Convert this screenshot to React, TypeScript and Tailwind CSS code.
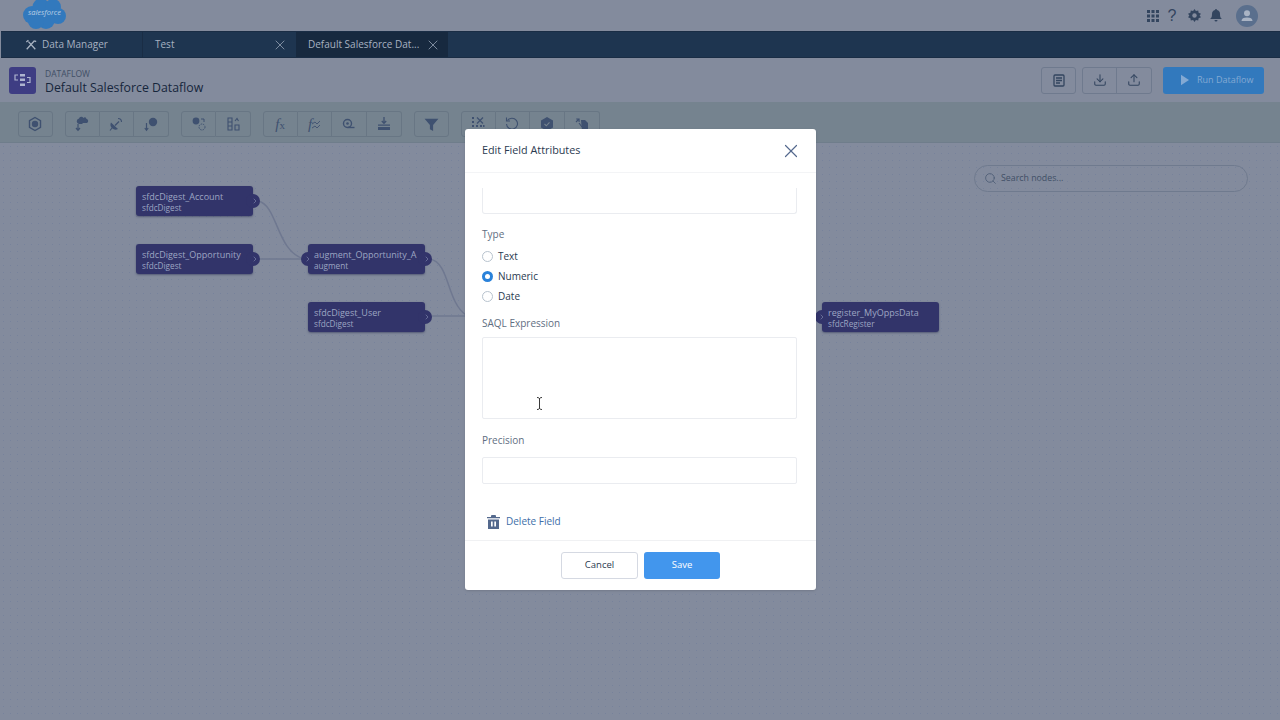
import { ChevronRight, Download, Search, Upload, X } from 'lucide-react'
import type { ReactNode } from 'react'

// small stroke wrapper so toolbar glyphs share one look
function Glyph({ children, size = 16 }: { children: ReactNode; size?: number }) {
  return (
    <svg width={size} height={size} viewBox="0 0 16 16" fill="#3f5170" stroke="none">
      {children}
    </svg>
  )
}

const icons: Record<string, ReactNode> = {
  hex: (
    <Glyph>
      <path d="M8 1.500l5.500 3.200v6.600L8 14.500l-5.500-3.200V4.700z" fill="none" stroke="#3f5170" strokeWidth="1.400" />
      <circle cx="8" cy="8" r="3.200" />
    </Glyph>
  ),
  cloudDown: (
    <Glyph>
      <path d="M5 2.500a2.500 2.500 0 0 1 4.400-.6 2 2 0 0 1 3 .9 2.200 2.200 0 0 1 .4 4.200H9L8 8H5a2.800 2.800 0 0 1 0-5.500z" />
      <path d="M4 8v6M2 12l2 2.400L6 12" fill="none" stroke="#3f5170" strokeWidth="1.200" />
    </Glyph>
  ),
  dish: (
    <Glyph>
      <path d="M3 6.500l7 6.500a5 5 0 0 1-7-6.500z" />
      <path d="M7 9.500l4-4" stroke="#3f5170" strokeWidth="1.300" />
      <path d="M10 2.500a3.500 3.500 0 0 1 3.500 3.500M4 12l-2 2.500" fill="none" stroke="#3f5170" strokeWidth="1.100" />
    </Glyph>
  ),
  blobDown: (
    <Glyph>
      <circle cx="10" cy="6" r="4.200" />
      <path d="M3.500 7v7M1.800 12l1.700 2.300L5.200 12" fill="none" stroke="#3f5170" strokeWidth="1.200" />
    </Glyph>
  ),
  dotRing: (
    <Glyph>
      <circle cx="5" cy="5" r="3.400" />
      <circle cx="11" cy="11" r="3" fill="none" stroke="#3f5170" strokeWidth="1" strokeDasharray="1.500 1" />
      <path d="M10 3h3v3" fill="none" stroke="#3f5170" strokeWidth="1" />
    </Glyph>
  ),
  blocks: (
    <Glyph>
      <path d="M3 2h4v12H3zM10 9h4v5h-4z" fill="none" stroke="#3f5170" strokeWidth="1.100" />
      <path d="M3 6h4M3 10h4M10 5l2-2.500L13.500 5" fill="none" stroke="#3f5170" strokeWidth="1.100" />
    </Glyph>
  ),
  fx: (
    <span className="font-['Liberation_Serif',serif] text-[15px] italic leading-none text-[#3f5170]">
      f<span className="text-[11px] not-italic">x</span>
    </span>
  ),
  fxWave: (
    <span className="flex items-center font-['Liberation_Serif',serif] text-[15px] italic leading-none text-[#3f5170]">
      f
      <svg width="9" height="9" viewBox="0 0 9 9" fill="none" stroke="#3f5170" strokeWidth="0.900">
        <path d="M0 4l3-2 2 2 3-3M0 8l3-2 2 2 3-3" />
      </svg>
    </span>
  ),
  tape: (
    <Glyph>
      <circle cx="6.500" cy="7.500" r="4" fill="none" stroke="#3f5170" strokeWidth="1.400" />
      <circle cx="6.500" cy="7.500" r="1.300" />
      <path d="M7 11.500h6.500" stroke="#3f5170" strokeWidth="1.400" />
    </Glyph>
  ),
  loadBar: (
    <Glyph>
      <path d="M8 1v6M5.800 5L8 7.400 10.200 5" fill="none" stroke="#3f5170" strokeWidth="1.300" />
      <path d="M2 8.500h12v1.200H2zM2 11h12v3H2z" />
    </Glyph>
  ),
  filter: (
    <Glyph size={17}>
      <path d="M1.500 2.500h13L9.500 8.500V14l-3-1.500v-4z" />
    </Glyph>
  ),
  gridX: (
    <Glyph>
      <path d="M2 1h2v2H2zM2 5h2v2H2zM2 9h2v2H2zM2 13h2v2H2zM6 9h2v2H6zM6 13h2v2H6zM10 9h2v2h-2zM10 13h2v2h-2zM13 9h1.500v2H13zM13 13h1.500v2H13z" />
      <path d="M7 1.500l6 6M13 1.500l-6 6" stroke="#3f5170" strokeWidth="1.200" />
    </Glyph>
  ),
  undo: (
    <Glyph>
      <path d="M3.500 4.500A5.500 5.500 0 1 1 2.500 8" fill="none" stroke="#3f5170" strokeWidth="1.100" />
      <path d="M2.500 1.500v3.500h3.500" fill="none" stroke="#3f5170" strokeWidth="1.100" />
    </Glyph>
  ),
  shield: (
    <Glyph>
      <path d="M8 1l6 3.400v7.200L8 15l-6-3.400V4.400z" />
      <path d="M5.500 8l1.800 1.800 3.200-3.400" fill="none" stroke="#75838f" strokeWidth="1.100" />
    </Glyph>
  ),
  docUp: (
    <Glyph>
      <path d="M7 4h4l3 3v8H8z" />
      <path d="M2 6l3-3M2.200 3h2.900v2.900M5 7l3 4" fill="none" stroke="#3f5170" strokeWidth="1.100" />
    </Glyph>
  ),
}

const toolbarGroups = [
  ['hex'],
  ['cloudDown', 'dish', 'blobDown'],
  ['dotRing', 'blocks'],
  ['fx', 'fxWave', 'tape', 'loadBar'],
  ['filter'],
  ['gridX', 'undo', 'shield', 'docUp'],
]

const nodes = [
  { name: 'sfdcDigest_Account', type: 'sfdcDigest', left: 'left-[136px]', top: 'top-[43px]', inPort: false, outPort: true },
  { name: 'sfdcDigest_Opportunity', type: 'sfdcDigest', left: 'left-[136px]', top: 'top-[101px]', inPort: false, outPort: true },
  { name: 'augment_Opportunity_A', type: 'augment', left: 'left-[308px]', top: 'top-[101px]', inPort: true, outPort: true },
  { name: 'sfdcDigest_User', type: 'sfdcDigest', left: 'left-[308px]', top: 'top-[159px]', inPort: false, outPort: true },
  { name: 'register_MyOppsData', type: 'sfdcRegister', left: 'left-[822px]', top: 'top-[159px]', inPort: true, outPort: false },
]

function Port({ side }: { side: 'in' | 'out' }) {
  return (
    <div
      className={`absolute top-[8px] flex h-[14px] w-[14px] items-center justify-center rounded-full bg-[#32346a] ${
        side === 'in' ? 'left-[-7px]' : 'right-[-7px]'
      }`}
    >
      <ChevronRight size={8} strokeWidth={1.500} className={`text-[#9aa3c2] ${side === 'in' ? '' : 'ml-[3px]'}`} />
    </div>
  )
}

function Radio({ label, checked }: { label: string; checked?: boolean }) {
  return (
    <div className="flex h-[20px] items-center gap-[5px]">
      {checked ? (
        <span className="flex h-[11px] w-[11px] items-center justify-center rounded-full bg-[#2a82da]">
          <span className="h-[5px] w-[5px] rounded-full bg-white" />
        </span>
      ) : (
        <span className="h-[11px] w-[11px] rounded-full border border-[#b8c3ce] bg-white" />
      )}
      <span className="text-[10px] text-[#2b3a50]">{label}</span>
    </div>
  )
}

export default function App() {
  return (
    <div className="flex h-[720px] w-[1280px] flex-col overflow-hidden bg-[#838b9d] font-['Open_Sans',sans-serif]">
      {/* Global header */}
      <div className="flex h-[31px] shrink-0 items-center justify-between pl-[22px] pr-[22px]">
        <div className="relative h-[31px] w-[44px] overflow-hidden">
          <svg width="44" height="30" viewBox="0 0 44 30" fill="#3279bd">
            <circle cx="10" cy="15" r="9" />
            <circle cx="19" cy="7" r="8.500" />
            <circle cx="31" cy="7" r="8" />
            <circle cx="36" cy="16" r="8" />
            <circle cx="24" cy="20" r="9" />
            <circle cx="14" cy="21" r="8" />
          </svg>
          <span className="absolute left-[6px] top-[7px] text-[7.500px] italic text-[#b9cfe6]">salesforce</span>
        </div>
        <div className="flex items-center">
          <svg width="12" height="12" viewBox="0 0 12 12" fill="#33455f">
            <path d="M0 0h3v3H0zM4.500 0h3v3h-3zM9 0h3v3H9zM0 4.500h3v3H0zM4.500 4.500h3v3h-3zM9 4.500h3v3H9zM0 9h3v3H0zM4.500 9h3v3h-3zM9 9h3v3H9z" />
          </svg>
          <span className="ml-[8px] w-[10px] text-center font-['Liberation_Sans',sans-serif] text-[16px] leading-none text-[#33455f]">?</span>
          <svg className="ml-[11px]" width="13" height="13" viewBox="0 0 14 14" fill="#33455f">
            <path d="M7 0l1.500 2.200L11 1.500l.4 2.600L14 5 12.500 7 14 9l-2.600.9-.4 2.600-2.500-.7L7 14l-1.500-2.200-2.500.7-.4-2.600L0 9l1.500-2L0 5l2.600-.9.4-2.600 2.500.7z" />
            <circle cx="7" cy="7" r="2.400" fill="#838b9d" />
          </svg>
          <svg className="ml-[9px]" width="12" height="13" viewBox="0 0 12 13" fill="#33455f">
            <path d="M6 0a1 1 0 0 1 1 1c2 .5 3 2 3 4 0 3 .6 3.800 2 5H0c1.400-1.200 2-2 2-5 0-2 1-3.500 3-4a1 1 0 0 1 1-1zM4.500 11h3a1.500 1.500 0 0 1-3 0z" />
          </svg>
          <span className="ml-[14px] flex h-[22px] w-[22px] items-center justify-center rounded-full bg-[#5a6f8d]">
            <svg width="14" height="14" viewBox="0 0 14 14" fill="#aab4c4">
              <circle cx="7" cy="4.200" r="3" />
              <path d="M1.500 12c0-2.500 2-3.600 5.500-3.600s5.500 1.100 5.500 3.600z" />
            </svg>
          </span>
        </div>
      </div>

      {/* Tabs */}
      <div className="ml-[1px] flex h-[27px] shrink-0 border-y border-y-[#1a2d45] bg-[#1e3550] text-[10px] text-[#a7b2c1]">
        <div className="flex w-[142px] items-center gap-[5px] border-r border-[#1a2d45] pl-[24px]">
          <svg width="12" height="12" viewBox="0 0 14 14" fill="none" stroke="#a7b2c1" strokeWidth="1.500">
            <path d="M2 12L11 2M4 3l8 9M1.500 3.500L4 1.500M11 2l2 1" />
          </svg>
          Data Manager
        </div>
        <div className="flex w-[153px] items-center justify-between pl-[12px] pr-[8px]">
          Test
          <X size={16} strokeWidth={1.300} className="text-[#8c9aad]" />
        </div>
        <div className="flex w-[152px] items-center justify-between bg-[#17293f] pl-[12px] pr-[7px]">
          <span className="truncate">Default Salesforce Dat...</span>
          <X size={16} strokeWidth={1.300} className="shrink-0 text-[#8c9aad]" />
        </div>
      </div>

      {/* Dataflow title row */}
      <div className="flex h-[44px] shrink-0 items-center justify-between pl-[9px] pr-[16px]">
        <div className="flex items-center gap-[9px]">
          <div className="flex h-[27px] w-[27px] items-center justify-center rounded-[3px] bg-[#3e3d83]">
            <svg width="17" height="14" viewBox="0 0 17 14" fill="#aeb4cf">
              <path d="M6 1h5v2.500H6zM6 5.500h5V8H6zM6 10.500h5V13H6z" />
              <path d="M4 2H1v5h3M13 4.500h3v5h-3" fill="none" stroke="#aeb4cf" strokeWidth="1.200" />
            </svg>
          </div>
          <div className="flex flex-col pt-[3px]">
            <span className="text-[8.500px] leading-[11px] text-[#414f66]">DATAFLOW</span>
            <span className="text-[12.300px] leading-[17px] text-[#16263c]">Default Salesforce Dataflow</span>
          </div>
        </div>
        <div className="flex items-center">
          <button className="flex h-[27px] w-[35px] items-center justify-center rounded-[3px] border border-[#6f7a8e]">
            <svg width="12" height="13" viewBox="0 0 12 13" fill="none" stroke="#33455f" strokeWidth="1.300">
              <rect x="1" y="1" width="10" height="11" rx="1" />
              <path d="M3 4h6M3 6.500h6M3 9h4" />
            </svg>
          </button>
          <div className="ml-[6px] flex h-[27px] rounded-[3px] border border-[#6f7a8e]">
            <button className="flex w-[34px] items-center justify-center border-r border-[#6f7a8e] text-[#33455f]">
              <Download size={14} strokeWidth={1.800} />
            </button>
            <button className="flex w-[34px] items-center justify-center text-[#33455f]">
              <Upload size={14} strokeWidth={1.800} />
            </button>
          </div>
          <button className="ml-[11px] flex h-[27px] w-[101px] items-center gap-[8px] rounded-[3px] bg-[#3279bd] pl-[18px] text-[9px] text-[#83a9d3]">
            <svg width="8" height="12" viewBox="0 0 9 12" fill="#83a9d3">
              <path d="M0 0l9 6-9 6z" />
            </svg>
            Run Dataflow
          </button>
        </div>
      </div>

      {/* Node toolbar */}
      <div className="flex h-[41px] shrink-0 items-start gap-[12px] border-b border-[#6f7d8b] bg-[#75838f] pl-[18px] pt-[9px]">
        {toolbarGroups.map((group, i) => (
          <div key={i} className="flex h-[26px]">
            {group.map((name, j) => (
              <div
                key={name}
                className={`flex w-[34.800px] items-center justify-center border-y border-r border-[#687684] ${
                  j === 0 ? 'rounded-l-[3px] border-l' : ''
                } ${j === group.length - 1 ? 'rounded-r-[3px]' : ''}`}
              >
                {icons[name]}
              </div>
            ))}
          </div>
        ))}
      </div>

      {/* Canvas */}
      <div className="relative flex-1 bg-[radial-gradient(#77829b_0.6px,transparent_0.8px)] bg-[length:7px_7px]">
        <svg className="absolute left-0 top-0" width="480" height="200" fill="none" stroke="#6f7890" strokeWidth="1.500">
          <path d="M258 58c20 4 18 50 46 58" />
          <path d="M258 116h46" />
          <path d="M430 116c20 4 16 42 36 56" />
          <path d="M430 173h36" />
        </svg>

        {nodes.map((node) => (
          <div
            key={node.name}
            className={`absolute flex h-[30px] w-[117px] flex-col justify-center rounded-[3px] bg-[#32346a] pl-[6px] pt-[2px] shadow-[0_1px_2px_rgba(40,45,80,0.5)] ${node.left} ${node.top}`}
          >
            {node.inPort && <Port side="in" />}
            {node.outPort && <Port side="out" />}
            <span className="relative whitespace-nowrap text-[9px] leading-[11px] text-[#9da5c2]">{node.name}</span>
            <span className="relative text-[8.200px] leading-[11px] text-[#9da5c2]">{node.type}</span>
          </div>
        ))}

        <div className="absolute left-[974px] top-[22px] flex h-[27px] w-[274px] items-center gap-[4px] rounded-full border border-[#6f7a8e] pl-[9px] text-[8.800px] text-[#414f66]">
          <Search size={13} strokeWidth={1.500} className="text-[#4b5b74]" />
          Search nodes...
        </div>
      </div>

      {/* Edit field modal */}
      <div className="absolute left-[465px] top-[129px] flex h-[461px] w-[351px] flex-col rounded-[3px] bg-white shadow-sm">
        <div className="flex h-[44px] shrink-0 items-center justify-between border-b border-[#f3f4f6] pl-[17px] pr-[14px]">
          <span className="text-[10.800px] text-[#2b3a50]">Edit Field Attributes</span>
          <X size={22} strokeWidth={1.300} className="text-[#54698d]" />
        </div>

        <div className="flex flex-1 flex-col pl-[17px] pr-[19px] pt-[15px]">
          <div className="h-[26px] rounded-b-[3px] border-x border-b border-[#eaecf0]" />

          <div className="mt-[12px] text-[10px] leading-[16px] text-[#5f6e82]">Type</div>
          <div className="mt-[4px] flex flex-col">
            <Radio label="Text" />
            <Radio label="Numeric" checked />
            <Radio label="Date" />
          </div>

          <div className="mt-[9px] text-[10px] leading-[16px] text-[#5f6e82]">SAQL Expression</div>
          <div className="mt-[6px] h-[82px] rounded-[2px] border border-[#eaecf0]" />

          <div className="mt-[13px] text-[10px] leading-[16px] text-[#5f6e82]">Precision</div>
          <div className="mt-[9px] h-[27px] rounded-[2px] border border-[#eaecf0]" />

          <div className="mt-[30px] flex items-center gap-[6px] pl-[5px] text-[10px] text-[#3d6ea8]">
            <svg width="13" height="14" viewBox="0 0 13 14" fill="#54698d">
              <path d="M5 0h3a1 1 0 0 1 1 1v1h4v1.200H0V2h4V1a1 1 0 0 1 1-1zM1 4.500h11V14H1zM4 6.500v5h1.700v-5zM7.300 6.500v5H9v-5z" fillRule="evenodd" />
            </svg>
            Delete Field
          </div>
        </div>

        <div className="flex h-[50px] shrink-0 items-start justify-center gap-[6px] border-t border-[#f0f1f3] pt-[11px]">
          <button className="h-[27px] w-[77px] rounded-[3px] border border-[#d5d9e2] bg-white text-[9.500px] text-[#2b3a50]">Cancel</button>
          <button className="h-[27px] w-[76px] rounded-[3px] bg-[#4296ed] text-[9.500px] text-white">Save</button>
        </div>
      </div>

      {/* I-beam mouse pointer */}
      <svg className="absolute left-[536px] top-[397px]" width="7" height="13" viewBox="0 0 7 13" fill="none" stroke="#222" strokeWidth="0.900">
        <path d="M1 .5c1.500 0 2.500.5 2.500 1.500v9c0 1-1 1.500-2.500 1.500M6 .5C4.500.5 3.500 1 3.500 2M6 12.500c-1.500 0-2.500-.5-2.500-1.500" />
      </svg>
    </div>
  )
}
